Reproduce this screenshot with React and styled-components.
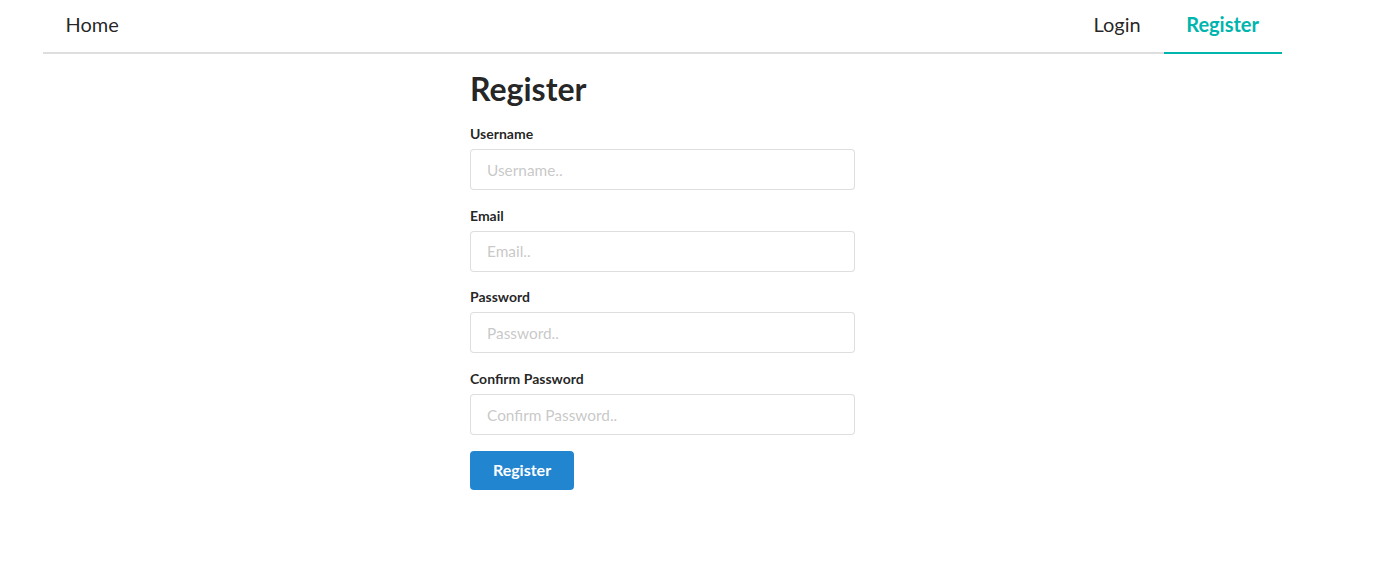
import React from "react";
import styled, { createGlobalStyle } from "styled-components";

const GlobalStyle = createGlobalStyle`
  body {
    margin: 0;
    background: #ffffff;
    font-family: Lato, "Helvetica Neue", Arial, sans-serif;
    color: rgba(0, 0, 0, 0.87);
  }
`;

const Page = styled.div`
  width: 1394px;
  min-height: 573px;
`;

const Menu = styled.nav`
  display: flex;
  align-items: flex-end;
  margin-left: 43px;
  width: 1239px;
  border-bottom: 2px solid rgba(34, 36, 38, 0.15);
`;

const Spacer = styled.div`
  flex: 1;
`;

const MenuItem = styled.a`
  display: block;
  font-size: 20px;
  line-height: 20px;
  padding: 14px 23px 18px 22.5px;
  margin-bottom: -2px;
  border-bottom: 2px solid ${({ $active }) => ($active ? "#00b5ad" : "transparent")};
  color: ${({ $active }) => ($active ? "#00b5ad" : "rgba(0, 0, 0, 0.87)")};
  font-weight: ${({ $active }) => ($active ? 700 : 400)};
  cursor: pointer;
  text-decoration: none;
`;

const Form = styled.form`
  margin-left: 470px;
  width: 385px;
  display: flex;
  flex-direction: column;
`;

const Heading = styled.h1`
  margin: 16px 0 17px;
  font-size: 32px;
  line-height: 38px;
  font-weight: 700;
  color: rgba(0, 0, 0, 0.87);
`;

const Field = styled.div`
  display: flex;
  flex-direction: column;
  margin-bottom: 17px;

  &:nth-child(n + 3) {
    margin-top: -0.34px;
  }
`;

const Label = styled.label`
  font-size: 14px;
  line-height: 18px;
  font-weight: 700;
  margin-bottom: 6px;
  color: rgba(0, 0, 0, 0.87);
`;

const Input = styled.input`
  box-sizing: border-box;
  height: 41px;
  padding: 0 16px;
  font-family: Lato, "Helvetica Neue", Arial, sans-serif;
  font-size: 15.4px;
  color: rgba(0, 0, 0, 0.87);
  border: 1px solid rgba(34, 36, 38, 0.15);
  border-radius: 4px;
  outline: none;
  &::placeholder {
    color: rgba(191, 191, 191, 0.87);
  }
`;

const Button = styled.button`
  align-self: flex-start;
  width: 104px;
  height: 39px;
  margin-top: -1px;
  padding: 0 0 2px;
  border: none;
  border-radius: 4px;
  background: #2185d0;
  color: #ffffff;
  font-family: Lato, "Helvetica Neue", Arial, sans-serif;
  font-size: 16px;
  font-weight: 700;
  cursor: pointer;
`;

const fields = [
  { label: "Username", type: "text" },
  { label: "Email", type: "email" },
  { label: "Password", type: "password" },
  { label: "Confirm Password", type: "password" },
];

export default function App() {
  return (
    <Page>
      <GlobalStyle />
      <Menu>
        <MenuItem>Home</MenuItem>
        <Spacer />
        <MenuItem>Login</MenuItem>
        <MenuItem $active>Register</MenuItem>
      </Menu>
      <Form onSubmit={(e) => e.preventDefault()}>
        <Heading>Register</Heading>
        {fields.map((f) => (
          <Field key={f.label}>
            <Label>{f.label}</Label>
            <Input type={f.type} placeholder={`${f.label}..`} />
          </Field>
        ))}
        <Button type="submit">Register</Button>
      </Form>
    </Page>
  );
}
